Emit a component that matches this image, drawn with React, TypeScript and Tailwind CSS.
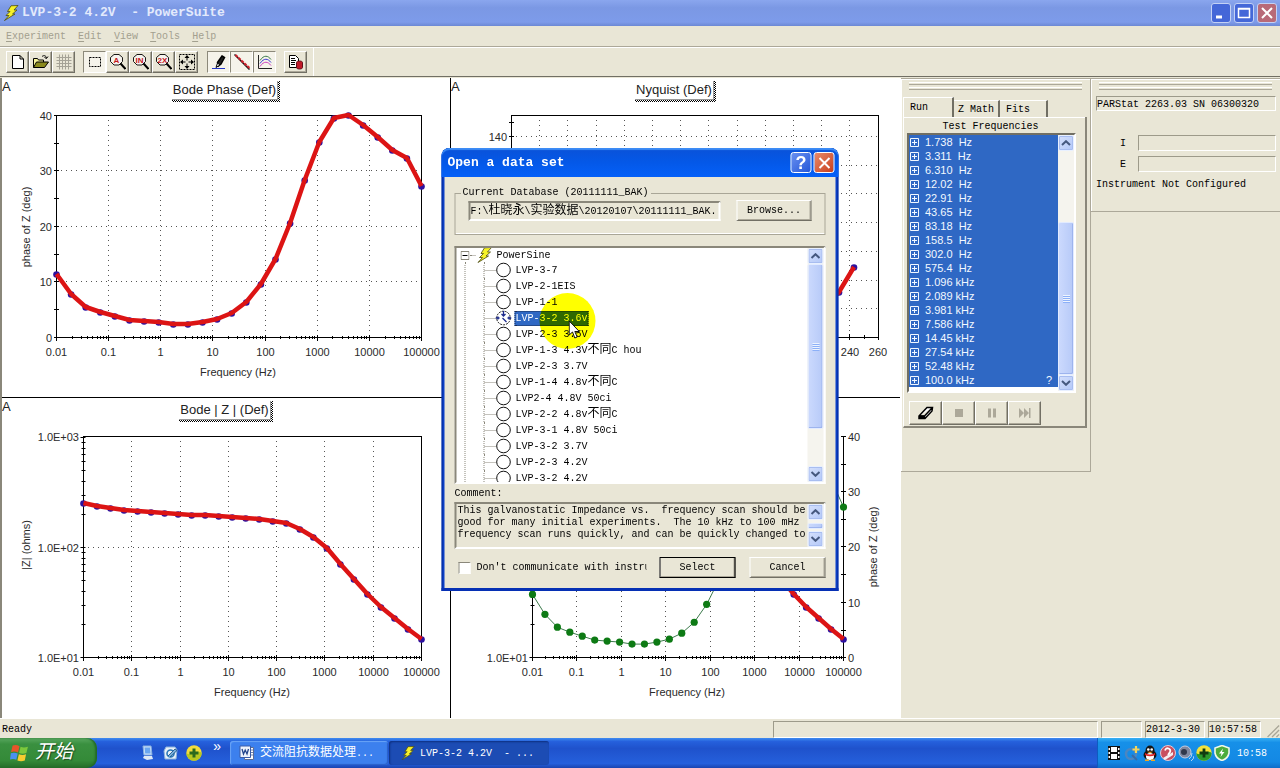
import React from "react";

const LIST = [
  "1.738  Hz", "3.311  Hz", "6.310  Hz", "12.02  Hz", "22.91  Hz", "43.65  Hz",
  "83.18  Hz", "158.5  Hz", "302.0  Hz", "575.4  Hz", "1.096 kHz", "2.089 kHz",
  "3.981 kHz", "7.586 kHz", "14.45 kHz", "27.54 kHz", "52.48 kHz", "100.0 kHz",
];

const DATA_SETS = [
  "LVP-3-7", "LVP-2-1EIS", "LVP-1-1", "LVP-3-2 3.6v", "LVP-2-3 3.5V",
  "LVP-1-3 4.3V不同C hou", "LVP-2-3 3.7V", "LVP-1-4 4.8v不同C", "LVP2-4 4.8V 50ci",
  "LVP-2-2 4.8v不同C", "LVP-3-1 4.8V 50ci", "LVP-3-2 3.7V", "LVP-2-3 4.2V", "LVP-3-2 4.2V",
];
const SELECTED = "LVP-3-2 3.6v";

const PHASE = [
  274, 294, 307, 312, 316, 320, 321, 322, 324, 324, 322, 319, 313, 302, 284, 259,
  223, 180, 142, 118, 115, 125, 137, 150, 158, 186,
];
const MODULUS = [
  503, 506, 508, 510, 511, 512, 513, 514, 515, 515, 516, 517, 518, 519, 521, 523,
  529, 537, 548, 564, 579, 594, 607, 618, 629, 639,
];
const DECADES = ["0.01", "0.1", "1", "10", "100", "1000", "10000", "100000"];

/* Latin text is set in a 6px-wide mono face; Han characters are two cells wide. */
function Mixed({ text }: { text: string }) {
  return (
    <>
      {text.split(/([\u4e00-\u9fff]+)/).map((part, i) =>
        i % 2 ? <span key={i} className="text-[12px] leading-none">{part}</span> : part
      )}
    </>
  );
}

function Bolt({ size }: { size: "sm" | "md" }) {
  return (
    <svg viewBox="0 0 16 16" className={size === "sm" ? "size-[14px] shrink-0" : "size-4 shrink-0"} aria-hidden="true">
      <path d="M8 .8 15 .5 11 5h3L9.5 9H12L1.5 15.5 6 10.5H3L7 6.5H4.5Z" fill="#f6f22a" stroke="#4a4a10" strokeWidth=".8" />
    </svg>
  );
}

type Pt = [number, number];
const path = (pts: Pt[]) => pts.map((p) => p.join(",")).join(" ");
const spread = (x0: number, x1: number, ys: number[]): Pt[] =>
  ys.map((y, i) => [x0 + ((x1 - x0) * i) / (ys.length - 1), y]);

function LogAxisX({ x0, x1, top, bottom }: { x0: number; x1: number; top: number; bottom: number }) {
  const step = (x1 - x0) / 7;
  return (
    <g>
      {DECADES.map((d, i) => {
        const x = Math.round(x0 + step * i) + 0.5;
        return (
          <g key={d}>
            {i > 0 && i < 7 && (
              <line x1={x} x2={x} y1={top + 5} y2={bottom} stroke="#555" strokeDasharray="1 4" />
            )}
            <line x1={x} x2={x} y1={bottom - 2} y2={bottom + 4} stroke="#000" />
            <text x={x} y={bottom + 19} textAnchor="middle">{d}</text>
            {i < 7 &&
              [2, 3, 4, 5, 6, 7, 8, 9].map((n) => {
                const mx = Math.round(x0 + step * (i + Math.log10(n))) + 0.5;
                return <line key={n} x1={mx} x2={mx} y1={bottom - 1} y2={bottom + 2} stroke="#000" />;
              })}
          </g>
        );
      })}
    </g>
  );
}

function LogTicksY({ x, top, bottom }: { x: number; top: number; bottom: number }) {
  const step = (bottom - top) / 2;
  return (
    <g stroke="#000">
      {[0, 1, 2].map((d) => (
        <line key={d} x1={x - 3} x2={x + 2} y1={Math.round(top + d * step - 0.5) + 0.5} y2={Math.round(top + d * step - 0.5) + 0.5} />
      ))}
      {[0, 1].flatMap((d) =>
        [2, 3, 4, 5, 6, 7, 8, 9].map((n) => {
          const y = Math.round(bottom - step * (d + Math.log10(n))) + 0.5;
          return <line key={`${d}${n}`} x1={x - 2} x2={x + 2} y1={y} y2={y} />;
        })
      )}
    </g>
  );
}

function RedSeries({ pts }: { pts: Pt[] }) {
  return (
    <g>
      {pts.map(([x, y], i) => (
        <circle key={i} cx={x} cy={y + 0.5} r="3.3" fill="#2c12a0" />
      ))}
      <polyline points={path(pts)} fill="none" stroke="#dc1414" strokeWidth="4.5" strokeLinejoin="round" />
    </g>
  );
}

function ChartCell({ title, viewBox, border, children }: { title?: string; viewBox: string; border: string; children: React.ReactNode }) {
  return (
    <section className={`flex min-h-0 min-w-0 flex-col overflow-hidden border-black ${border}`}>
      <header className="relative flex h-6 shrink-0 justify-center pt-[3px]">
        <span className="absolute left-0 top-0 text-[13px] leading-[18px] text-[#222]">A</span>
        {title && (
          <div className="h-[21px] bg-[repeating-conic-gradient(#000_0_25%,#fff_0_50%)] bg-[length:2px_2px] pb-[2px] pr-[2px]">
            <h2 className="h-full border-b border-r border-[#999] bg-white px-px text-[13px] leading-[18px] text-[#222]">{title}</h2>
          </div>
        )}
      </header>
      <svg viewBox={viewBox} className="min-h-0 w-full flex-1 fill-[#2a2a2a] text-[11px]" role="img" aria-label={title ?? "Chart"}>
        {children}
      </svg>
    </section>
  );
}

function PhaseChart() {
  return (
    <ChartCell title="Bode Phase (Def)" viewBox="2 102 448 295" border="border-b border-r">
      <rect x="56.5" y="115.5" width="365" height="222" fill="none" stroke="#000" />
      <LogAxisX x0={56} x1={421} top={115} bottom={337} />
      {[0, 10, 20, 30, 40].map((v, i) => {
        const y = 337.5 - Math.round(i * 55.5);
        return (
          <g key={v}>
            {i > 0 && i < 4 && <line x1="61" x2="421" y1={y} y2={y} stroke="#555" strokeDasharray="1 4" />}
            <line x1="54" x2="59" y1={y} y2={y} stroke="#000" />
            {i > 0 && <line x1="54" x2="59" y1={y + 28} y2={y + 28} stroke="#000" />}
            <text x="52" y={y + 4} textAnchor="end">{v}</text>
          </g>
        );
      })}
      <text transform="translate(30 227) rotate(-90)" textAnchor="middle">phase of Z (deg)</text>
      <text x="238" y="376" textAnchor="middle">Frequency (Hz)</text>
      <RedSeries pts={spread(56.5, 421.5, PHASE)} />
    </ChartCell>
  );
}

function NyquistChart() {
  const vs = Array.from({ length: 12 }, (_, i) => Math.round(511 + (i + 1) * 28.2) + 0.5);
  return (
    <ChartCell title="Nyquist (Def)" viewBox="451 102 449 295" border="border-b">
      <rect x="511.5" y="115.5" width="367" height="222" fill="none" stroke="#000" />
      {vs.map((x) => (
        <g key={x}>
          <line x1={x} x2={x} y1="120" y2="337" stroke="#555" strokeDasharray="1 4" />
          <line x1={x} x2={x} y1="334" y2="340" stroke="#000" />
        </g>
      ))}
      <line x1="864.5" x2="864.5" y1="335" y2="339" stroke="#000" />
      <line x1="878.5" x2="878.5" y1="334" y2="340" stroke="#000" />
      {Array.from({ length: 7 }, (_, i) => Math.round(136 + i * 28.7) + 0.5).map((y) => (
        <g key={y}>
          <line x1="516" x2="878" y1={y} y2={y} stroke="#555" strokeDasharray="1 4" />
          <line x1="509" x2="514" y1={y} y2={y} stroke="#000" />
        </g>
      ))}
      <line x1="509" x2="514" y1="122.5" y2="122.5" stroke="#000" />
      <text x="507" y="141" textAnchor="end">140</text>
      <text x="850" y="356" textAnchor="middle">240</text>
      <text x="878" y="356" textAnchor="middle">260</text>
      <RedSeries pts={[[790, 322], [818, 312], [839, 292], [854, 267]]} />
    </ChartCell>
  );
}

function ModulusChart() {
  return (
    <ChartCell title="Bode | Z | (Def)" viewBox="2 422 448 296" border="border-r">
      <rect x="83.5" y="436.5" width="338" height="221" fill="none" stroke="#000" />
      <LogAxisX x0={83} x1={421} top={436} bottom={657} />
      <LogTicksY x={83.5} top={437} bottom={657} />
      <line x1="88" x2="421" y1="547.5" y2="547.5" stroke="#555" strokeDasharray="1 4" />
      <text x="79" y="441" textAnchor="end">1.0E+03</text>
      <text x="79" y="552" textAnchor="end">1.0E+02</text>
      <text x="79" y="662" textAnchor="end">1.0E+01</text>
      <text transform="translate(30 545) rotate(-90)" textAnchor="middle">|Z| (ohms)</text>
      <text x="252" y="696" textAnchor="middle">Frequency (Hz)</text>
      <RedSeries pts={spread(83.5, 421.5, MODULUS)} />
    </ChartCell>
  );
}

function CombinedChart() {
  const phase = spread(532.5, 843.5, PHASE.map((y) => 657.5 - (337.5 - y) * 0.993));
  return (
    <ChartCell viewBox="451 422 449 296" border="">
      <path d="M532.5 436V657.5H843.5V436" fill="none" stroke="#000" />
      <LogAxisX x0={532} x1={843} top={436} bottom={657} />
      <LogTicksY x={532.5} top={437} bottom={657} />
      <text x="528" y="662" textAnchor="end">1.0E+01</text>
      {[0, 10, 20, 30, 40].map((v, i) => {
        const y = 657.5 - Math.round(i * 55.25);
        return (
          <g key={v}>
            <line x1="841" x2="846" y1={y} y2={y} stroke="#000" />
            {i > 0 && <line x1="841" x2="846" y1={y + 28} y2={y + 28} stroke="#000" />}
            <text x="848" y={y + 4}>{v}</text>
          </g>
        );
      })}
      <text transform="translate(877 547) rotate(-90)" textAnchor="middle">phase of Z (deg)</text>
      <text x="687" y="696" textAnchor="middle">Frequency (Hz)</text>
      <polyline points={path(phase)} fill="none" stroke="#3c7a4c" />
      {phase.map(([x, y], i) => (
        <circle key={i} cx={x} cy={y} r="3.6" fill="#0d7a14" />
      ))}
      <RedSeries pts={spread(532.5, 843.5, MODULUS)} />
    </ChartCell>
  );
}

function ScrollArrow({ up }: { up?: boolean }) {
  return (
    <button aria-label={up ? "Scroll up" : "Scroll down"} className="flex h-4 w-full shrink-0 items-center justify-center rounded-[2px] border border-[#e8f0ff] bg-gradient-to-br from-[#d5e0fc] to-[#b3c8f8] shadow-[0_0_0_1px_#a8bdf0_inset]">
      <svg viewBox="0 0 10 6" className="h-[6px] w-[10px]">
        <path d={up ? "M1 5 5 1.2 9 5" : "M1 1 5 4.8 9 1"} fill="none" stroke="#46597f" strokeWidth="2" />
      </svg>
    </button>
  );
}

function ScrollBar({ lead, thumb, grip = true }: { lead: string; thumb: string; grip?: boolean }) {
  return (
    <div className="flex w-4 shrink-0 flex-col bg-[#f5f4ee]">
      <ScrollArrow up />
      <div className="flex min-h-0 flex-1 flex-col">
        <div className={lead} />
        <div className={`flex flex-col items-center justify-center gap-px rounded-[2px] border border-[#e2ebff] bg-gradient-to-r from-[#cbd9fd] to-[#b7caf8] shadow-[inset_-1px_-1px_0_#9db4ee] ${thumb}`}>
          {grip && [0, 1, 2, 3].map((n) => <i key={n} className="h-px w-[7px] bg-[#eef4fe] shadow-[0_1px_0_#8cb0f8]" />)}
        </div>
      </div>
      <ScrollArrow />
    </div>
  );
}

const RAISED = "border border-t-white border-l-white border-b-[#716f64] border-r-[#716f64] shadow-[inset_-1px_-1px_0_#aca899]";
const SUNKEN = "border border-t-[#9d9a8a] border-l-[#9d9a8a] border-b-white border-r-white";
const MONO = "font-['Liberation_Mono','Noto_Sans_CJK_SC',monospace] text-[10px]";

function Tool({ label, pressed, children }: { label: string; pressed?: boolean; children: React.ReactNode }) {
  return (
    <button
      aria-label={label}
      className={`flex h-[22px] w-[23px] items-center justify-center ${pressed ? "border border-b-white border-l-[#8c897a] border-r-white border-t-[#8c897a] bg-[#f5f3ea]" : RAISED}`}
    >
      <svg viewBox="0 0 16 16" className="size-4 shrink-0" fill="none" stroke="#000">{children}</svg>
    </button>
  );
}

function Lens({ text }: { text: string }) {
  return (
    <>
      <path d="M4 .5h5l3.500 3v4L9 11H4L.5 7.500v-4z" fill="#f6f3ee" strokeWidth=".9" />
      <path d="m10.500 9.500 5 5.500" strokeWidth="2" />
      <text x="6.5" y="8.500" textAnchor="middle" stroke="none" fill="#c4161c" className="text-[8px] font-bold">{text}</text>
    </>
  );
}

function Toolbar() {
  return (
    <div role="toolbar" className="flex h-[29px] items-center border-t border-white pl-[6px]">
      <Tool label="New"><path d="M2.500 1.500h7.500l3.500 3.500v9.500h-11zM10 1.500v3.500h3.500" fill="#fff" /></Tool>
      <Tool label="Open"><path d="M.5 13.500v-9h4l1 1.500h5v2" fill="#f5f29a" /><path d="m.5 13.500 3-5.500h12l-4 5.500z" fill="#8a8a1c" /><path d="M9 2.500c2-1.500 4-1 4.500 1.500m-2-.5 2 1 1.500-2" /></Tool>
      <Tool label="Grid"><path d="M.5 3.500h15M.5 6.500h15M.5 9.500h15M.5 12.500h15M3.500 .5v15M6.500 .5v15M9.500 .5v15M12.500 .5v15" stroke="#a5a296" /></Tool>
      <span className="w-2" />
      <Tool label="Select area" pressed><rect x="2.500" y="3.500" width="11" height="9" strokeDasharray="2 1" /></Tool>
      <Tool label="Zoom auto"><Lens text="A" /></Tool>
      <Tool label="Zoom in"><Lens text="IN" /></Tool>
      <Tool label="Zoom 2x"><Lens text="2X" /></Tool>
      <Tool label="Fit"><rect x=".5" y=".5" width="15" height="15" strokeDasharray="2 1" /><path d="M8 3v3.500M8 9.500V13M3 8h3.500M9.500 8H13" /><path d="m8 1 2.500 3h-5zM8 15l2.500-3h-5zM1 8l3-2.500v5zM15 8l-3-2.500v5z" fill="#000" stroke="none" /></Tool>
      <span className="w-[9px]" />
      <Tool label="Pen" pressed><path d="m11 2 2.500 1.500L10 10l-2.500 2-1-3.500z" fill="#222" strokeWidth="1.500" /><path d="m6.500 9 2.500 2L5 13.500z" fill="#fff" /><path d="M1 14.500h13" stroke="#2337c8" /></Tool>
      <Tool label="Line" pressed><path d="m.5.500 15 15" stroke="#111" strokeWidth="1.500" /><path d="m1.500 1 14 13" stroke="#d0202c" strokeWidth="2" strokeDasharray="3 1" /></Tool>
      <Tool label="Overlay" pressed><path d="M1.500 1v13.500H15" stroke="#222" /><path d="M3 6.500c4-6 8-5 11-1" stroke="#3a7a4a" /><path d="M3 9.500c4-6 8-5 11-1" stroke="#3a3ad0" /><path d="M3 12.500c4-6 8-5 11-1" stroke="#d040c0" /></Tool>
      <span className="w-2" />
      <Tool label="Report"><path d="M1.500 1.500h6l3 3v9h-9z" fill="#fff" /><path d="M3 4.500h4M3 6.500h5M3 8.500h4M3 10.500h4" /><path d="M8.500 8.500c0-2 6-2 6 0v5c0 2-6 2-6 0z" fill="#c01828" stroke="#601018" /></Tool>
      <span className="ml-[6px] h-full w-px border-r border-white bg-[#b5b2a2]" />
    </div>
  );
}

function CaptionButton({ label, kind }: { label: string; kind: "min" | "max" | "close" }) {
  return (
    <button aria-label={label} className={`flex size-5 items-center justify-center rounded-[3px] border border-[#c3d1f5] ${kind === "close" ? "bg-[#b86a78]" : "bg-[#4467d8]"}`}>
      <svg viewBox="0 0 14 14" className="size-[14px]" fill="none" stroke="#fff">
        {kind === "min" && <path d="M2 11h6" strokeWidth="3" />}
        {kind === "max" && <path d="M1.500 2.500h11v9h-11zM1 3h12" strokeWidth="1.500" />}
        {kind === "close" && <path d="m2 2 10 10M12 2 2 12" strokeWidth="2" />}
      </svg>
    </button>
  );
}

function Gripper() {
  return (
    <div className="flex flex-col gap-[2px]" aria-hidden="true">
      <div className="h-[3px] border-b border-t border-b-[#aca899] border-t-white" />
      <div className="h-[3px] border-b border-t border-b-[#aca899] border-t-white" />
    </div>
  );
}

function RunPanel() {
  return (
    <section className="flex h-[393px] w-[190px] flex-col border-b border-r border-[#aca899] pt-[3px] shadow-[inset_1px_1px_0_#fff]">
      <div className="px-2"><Gripper /></div>
      <div role="tablist" className={`mt-[7px] flex items-end pl-[2px] ${MONO} text-black`}>
        <button role="tab" aria-selected="true" className="h-5 w-[51px] border-l border-r-2 border-t border-l-white border-r-[#716f64] border-t-white pl-[6px] text-left leading-[17px]">Run</button>
        <button role="tab" aria-selected="false" className="h-[17px] w-[46px] border-r-2 border-t border-r-[#716f64] border-t-white pl-1 text-left leading-[17px]">Z Math</button>
        <button role="tab" aria-selected="false" className="h-[17px] w-[48px] border-r-2 border-t border-r-[#716f64] border-t-white pl-[6px] text-left leading-[17px]">Fits</button>
      </div>
      <div className="ml-[2px] mr-[3px] flex h-[311px] flex-col border-b-2 border-l border-r-2 border-b-[#8a877a] border-l-white border-r-[#8a877a] shadow-[inset_0_1px_0_#fff]">
        <h3 className={`pr-2 pt-[3px] text-center leading-[13px] ${MONO}`}>Test Frequencies</h3>
        <div className="ml-[3px] mr-[9px] flex h-[260px] border-2 border-b-white border-l-[#716f64] border-r-white border-t-[#716f64] bg-white">
          <ul className="min-w-0 flex-1 overflow-hidden text-[11px] text-[#f2f8ff]">
            {LIST.map((f, i) => (
              <li key={f} className="flex h-[14px] items-center bg-[#2f68c4] pl-px pr-[6px]">
                <svg viewBox="0 0 9 9" className="size-[9px] shrink-0" fill="none" stroke="#f2f8ff">
                  <path d="M.5.5h8v8h-8zM2 4.500h5M4.500 2v5" />
                </svg>
                <span className="ml-[6px] flex-1 whitespace-pre leading-[14px]">{f}</span>
                {i === LIST.length - 1 && <span>?</span>}
              </li>
            ))}
          </ul>
          <ScrollBar lead="h-[71px]" thumb="flex-1" />
        </div>
        <div className="ml-[5px] mt-2 flex">
          {["Edit", "Stop", "Pause", "Skip"].map((l, i) => (
            <button key={l} aria-label={l} className={`flex h-6 w-[33px] items-center justify-center ${RAISED}`}>
              <svg viewBox="0 0 16 14" className="h-[14px] w-4" fill="#aca899">
                {i === 0 && <path d="M1 10 9 1.500h5.500L14 5l-7 7.500H1Zm0 0h5.500L14 2M6.500 10v2.500" fill="#fff" stroke="#000" strokeWidth="1.500" />}
                {i === 0 && <path d="M1 9.500h5.500V13H1z" fill="#000" />}
                {i === 1 && <path d="M4 3h8v8H4z" />}
                {i === 2 && <path d="M4 2.500h3v9H4zM9 2.500h3v9H9z" />}
                {i === 3 && <path d="m2 2 5 5-5 5zM7 2l5 5-5 5zM12 2h1.500v10H12z" />}
              </svg>
            </button>
          ))}
        </div>
      </div>
    </section>
  );
}

function InstrumentPanel() {
  return (
    <section className={`flex h-[133px] min-w-0 flex-1 flex-col border-b border-[#aca899] pl-[5px] pr-1 pt-[3px] shadow-[inset_1px_1px_0_#fff] ${MONO} text-black`}>
      <div className="pl-[3px] pr-1"><Gripper /></div>
      <div className={`mt-[6px] h-[15px] leading-[15px] ${SUNKEN}`}>PARStat 2263.03 SN 06300320</div>
      <div className="mt-6 flex flex-col gap-[5px]">
        {["I", "E"].map((n) => (
          <label key={n} className="flex h-4 items-center">
            <span className="w-[42px] pl-6">{n}</span>
            <input readOnly className={`h-4 min-w-0 flex-1 bg-transparent ${SUNKEN}`} />
          </label>
        ))}
      </div>
      <p className="mt-[6px] leading-[14px]">Instrument Not Configured</p>
    </section>
  );
}

function Tree() {
  return (
    <div className="mt-[11px] flex h-[238px] border-2 border-b-white border-l-[#8a877a] border-r-white border-t-[#8a877a] bg-white">
      <ul className={`min-w-0 flex-1 overflow-hidden ${MONO} text-black`}>
        <li>
          <div className="flex h-[14px] items-center pl-1">
            <svg viewBox="0 0 9 9" className="size-[9px]" fill="none"><path d="M.5.500h8v8h-8z" stroke="#8a877a" /><path d="M2 4.500h5" stroke="#000" /></svg>
            <span className="mr-px w-[6px] border-t border-dotted border-[#8a877a]" />
            <Bolt size="md" />
            <span className="ml-1">PowerSine</span>
          </div>
          <ul className="ml-2 border-l border-dotted border-[#8a877a] pl-[18px]">
            {DATA_SETS.map((name) => {
              const on = name === SELECTED;
              return (
                <li key={name} className="relative flex h-4 items-center border-l border-dotted border-[#8a877a]">
                  <span className="w-[11px] border-t border-dotted border-[#8a877a]" />
                  <svg viewBox="0 0 16 16" className="size-4 shrink-0" fill="none" stroke="#111">
                    <circle cx="8" cy="8" r="6.8" strokeDasharray={on ? "2 1" : undefined} />
                    {on && <path d="M8 1v5M6 4l2 2 2-2M0 8h4M12 8h4M2.500 6.500v3M13.500 6.500v3M7 8l4 4" stroke="#1c2a8c" strokeWidth="1.3" />}
                  </svg>
                  <span className={`ml-[3px] whitespace-pre px-px leading-[15px] ${on ? "bg-[#2f68c4] text-white outline-dotted outline-1 -outline-offset-1 outline-[#1b2c55]" : ""}`}>
                    <Mixed text={name} />
                  </span>
                  {on && (
                    <>
                      <span className="absolute left-[55px] top-[-17px] z-10 size-[56px] rounded-full bg-[#ffff00] mix-blend-multiply" />
                      <svg viewBox="0 0 12 20" className="absolute left-[84px] top-[10px] z-20 h-5 w-3">
                        <path d="M.7 1v14l3.300-3 2.300 6 2.400-1-2.400-5.500h4.500z" fill="#fff" stroke="#111" />
                      </svg>
                    </>
                  )}
                </li>
              );
            })}
          </ul>
        </li>
      </ul>
      <ScrollBar lead="h-0" thumb="h-[165px]" />
    </div>
  );
}

function Dialog() {
  return (
    <div role="dialog" aria-label="Open a data set" className="absolute left-1/2 top-[148px] z-30 w-[397px] -translate-x-1/2 rounded-t-lg bg-[#0a3fc8] shadow-[inset_0_0_0_1px_#06268c]">
      <div className="flex h-[29px] items-center gap-[2px] rounded-t-lg bg-gradient-to-b from-[#0a52d8] via-[#0458e8] to-[#0560f8] pl-[6px] pr-1 shadow-[inset_0_2px_1px_#3d8cf5]">
        <h1 className="flex-1 font-['Liberation_Mono',monospace] text-[13px] font-bold text-white">Open a data set</h1>
        <button aria-label="Help" className="size-[21px] rounded-[3px] border border-white bg-gradient-to-br from-[#6a90f0] to-[#2456d8] text-[18px] font-bold leading-[18px] text-white">?</button>
        <button aria-label="Close" className="flex size-[21px] items-center justify-center rounded-[3px] border border-white bg-gradient-to-br from-[#e88a68] to-[#c83c18]">
          <svg viewBox="0 0 12 12" className="size-3" stroke="#fff" strokeWidth="2"><path d="m1 1 10 10M11 1 1 11" /></svg>
        </button>
      </div>
      <div className={`mx-[3px] flex flex-col bg-[#e9e6d6] px-[10px] pb-[10px] pt-[9px] text-black ${MONO}`}>
        <fieldset className="flex h-[49px] min-w-0 items-center justify-between border border-[#a9a697] px-[13px] pb-[3px] shadow-[inset_0_-1px_0_#fff]">
          <legend className="-ml-[8px] px-[2px] leading-[14px]">Current Database (20111111_BAK)</legend>
          <output className="block h-5 w-[252px] overflow-hidden whitespace-nowrap border-2 border-b-white border-l-[#8a877a] border-r-white border-t-[#8a877a] leading-[17px]">
            <Mixed text={"F:\\杜晓永\\实验数据\\20120107\\20111111_BAK."} />
          </output>
          <button className={`h-[21px] w-[75px] ${RAISED}`}>Browse...</button>
        </fieldset>
        <Tree />
        <label htmlFor="comment" className="pt-[3px] leading-[14px]">Comment:</label>
        <div className="mt-px flex h-[47px] border-2 border-b-white border-l-[#8a877a] border-r-white border-t-[#8a877a]">
          <textarea
            id="comment"
            readOnly
            wrap="off"
            className="min-w-0 flex-1 resize-none overflow-hidden bg-transparent pl-px pt-px leading-[12px]"
            defaultValue={"This galvanostatic Impedance vs.  frequency scan should be\ngood for many initial experiments.  The 10 kHz to 100 mHz\nfrequency scan runs quickly, and can be quickly changed to"}
          />
          <ScrollBar lead="h-[3px]" thumb="h-[6px]" grip={false} />
        </div>
        <div className="mt-2 flex h-[21px] items-center">
          <label className="flex w-[192px] items-center gap-[6px] overflow-hidden whitespace-nowrap pl-1">
            <input type="checkbox" className="size-3 shrink-0 appearance-none border border-b-white border-l-[#8a877a] border-r-white border-t-[#8a877a] bg-white" />
            Don't communicate with instrument
          </label>
          <button className={`ml-[13px] h-[21px] w-[76px] outline-1 -outline-offset-1 outline-black ${RAISED}`}>Select</button>
          <button className={`ml-auto h-[21px] w-[76px] ${RAISED}`}>Cancel</button>
        </div>
      </div>
      <div className="h-[3px] bg-[#0630b4]" />
    </div>
  );
}

function StatusBar() {
  return (
    <footer className={`flex h-5 items-stretch border-t border-white bg-[#e9e6d6] pl-[2px] pt-[2px] text-black ${MONO}`}>
      <span className="flex-1 leading-[17px]">Ready</span>
      <span className={`mr-[3px] w-[325px] ${SUNKEN}`} />
      <span className={`mr-[3px] w-[41px] ${SUNKEN}`} />
      <span className={`mr-[3px] w-[60px] leading-[15px] ${SUNKEN}`}>2012-3-30</span>
      <span className={`w-[53px] leading-[15px] ${SUNKEN}`}>10:57:58</span>
      <svg viewBox="0 0 18 17" className="ml-[3px] h-[17px] w-[16px]" stroke="#a9a697"><path d="m4 17 13-13M9 17l8-8M14 17l3-3" strokeWidth="1.5" /></svg>
    </footer>
  );
}

function Taskbar() {
  return (
    <nav className={`flex h-[30px] items-stretch bg-[linear-gradient(#3f8cf0,#2560dc_12%,#1f52cc_35%,#2560dc_85%,#1a44b0)] text-white ${MONO}`}>
      <button className="flex w-[97px] items-center gap-[6px] rounded-r-[10px] bg-[linear-gradient(#5aa860,#3a9040_20%,#348a38_75%,#256c28)] pl-[10px] shadow-[inset_-2px_0_2px_#226a28]">
        <svg viewBox="0 0 18 17" className="h-[18px] w-[19px]">
          <path d="M2.500 1.500Q5.500 0 9 2L7.600 8Q4.500 6.500 1 7.500z" fill="#e8542a" />
          <path d="M10 2.500Q13 4 17 2.500L15.500 8.500Q12 10 8.600 8.500z" fill="#7cc83c" />
          <path d="M.8 8.700Q4 7.500 7.300 9L6 15Q3 13.500 0 14.700z" fill="#4a90f0" />
          <path d="M8.400 9.700Q12 11.200 15.200 9.700L14 15.500Q10.500 17 7 15.500z" fill="#f8cc30" />
        </svg>
        <span className="text-[19px] italic leading-none [text-shadow:1px_1px_1px_#1c4a20]">开始</span>
      </button>
      <div className="flex w-[133px] items-center gap-[7px] pl-[43px]">
        <svg viewBox="0 0 16 16" className="size-4" aria-hidden="true"><path d="M3 1h8l1 9H4z" fill="#cfe4fb" stroke="#88b0e0" /><path d="M4.500 2.500h5.500l.6 6H5.200z" fill="#6aa6f0" /><path d="M4 11h8l1 3-6 1-4-2z" fill="#dfe9f5" /></svg>
        <svg viewBox="0 0 16 16" className="size-4" aria-hidden="true"><path d="M3 2h9l2 3-1 9H2L1 6z" fill="#e8f0f8" stroke="#8db4dc" /><circle cx="7.5" cy="8.5" r="3.5" fill="none" stroke="#2a78b8" strokeWidth="1.6" /><path d="m5 11 7-7 2 1.500L7 12" fill="#7ab0dc" stroke="#124a80" strokeWidth=".8" /></svg>
        <svg viewBox="0 0 16 16" className="size-4" aria-hidden="true"><circle cx="8" cy="8" r="7.7" fill="#f3dc3c" /><path d="M.3 8a7.700 7.700 0 0 0 15.400 0C11 4 5 12 .3 8z" fill="#b8c820" /><path d="M8 3.500v9M3.500 8h9" stroke="#2c6a1c" strokeWidth="3" /></svg>
        <span className="self-start pl-1 pt-[2px] text-[14px] leading-[14px]">»</span>
      </div>
      <button className="my-[3px] flex w-[158px] items-center gap-[5px] rounded-[3px] bg-[#3c80ee] pl-[9px] shadow-[inset_1px_1px_1px_#6aa4f6,inset_-1px_-1px_1px_#2a60c8]">
        <svg viewBox="0 0 16 16" className="size-4 shrink-0" aria-hidden="true"><path d="M5.500 2.500h9v12h-9z" fill="#fff" stroke="#5c6c94" /><path d="M12 5h2M12 7.500h2M12 10h2" stroke="#6c80b0" /><path d="M1 1h10.500v11.500H1z" fill="#eef3fc" stroke="#3a5ca8" /><path d="m3 4 1.500 5L6.200 5 8 9l1.500-5" fill="none" stroke="#23458c" strokeWidth="1.3" /></svg>
        <span className="whitespace-nowrap"><Mixed text="交流阻抗数据处理..." /></span>
      </button>
      <button className="my-[3px] ml-px flex w-[160px] items-center gap-[5px] whitespace-pre rounded-[3px] bg-[#1c4cb4] pl-3 shadow-[inset_1px_1px_2px_#0d2f80]">
        <Bolt size="sm" />
        LVP-3-2 4.2V  - ...
      </button>
      <div className="ml-auto flex w-[183px] items-center gap-[2px] border-l border-[#0d5cc0] bg-[linear-gradient(#38b0f4,#1690e8_15%,#1488e4_80%,#0f6cc8)] pl-2">
        <svg viewBox="0 0 16 16" className="size-4" aria-hidden="true"><path d="M2 1h12v14H2z" fill="#111" /><path d="M5 2h6v5H5zM5 9h6v5H5zM2.500 3h1.500v2H2.500zM2.500 7h1.500v2H2.500zM2.500 11h1.500v2H2.500zM12 3h1.500v2H12zM12 7h1.500v2H12zM12 11h1.500v2H12z" fill="#fff" /></svg>
        <svg viewBox="0 0 16 16" className="size-4" fill="none" aria-hidden="true"><circle cx="7" cy="9" r="5" stroke="#4c86c0" strokeWidth="2.5" /><path d="m8 10 5 5" stroke="#3a6ca4" strokeWidth="2" /><path d="M12 1v7M8.500 4.500h7" stroke="#f4d45c" strokeWidth="2.2" /></svg>
        <svg viewBox="0 0 16 16" className="size-4" aria-hidden="true"><ellipse cx="8" cy="10" rx="6.5" ry="5" fill="#151515" /><ellipse cx="8" cy="5.5" rx="4.5" ry="5" fill="#151515" /><ellipse cx="8" cy="11.5" rx="4" ry="3.5" fill="#fff" /><path d="M3 8q5 3 10 0v2q-5 2.500-10 0z" fill="#e02020" /><circle cx="6.3" cy="4.5" r="1.3" fill="#fff" /><circle cx="9.7" cy="4.5" r="1.3" fill="#fff" /><path d="M5 6.800h6L8 8.200zM3 14.500h4v1.500H3zM9 14.500h4v1.500H9z" fill="#f6a81c" /></svg>
        <svg viewBox="0 0 16 16" className="size-4" aria-hidden="true"><circle cx="8" cy="8" r="7.5" fill="#c85060" stroke="#e4c8d4" /><path d="M5 5.500q1-3 3.500-2t1.500 3.500L8 10" fill="none" stroke="#fff" strokeWidth="1.8" /><path d="m3 13 10-6v3l-8 5z" fill="#f5eef2" /></svg>
        <svg viewBox="0 0 16 16" className="size-4" aria-hidden="true"><circle cx="7" cy="7" r="6" fill="#8088a0" stroke="#c4cce0" /><circle cx="6" cy="7" r="3" fill="#30384c" /><path d="M11 14q3-2 3-6M13 16q3-2 3-5" fill="none" stroke="#b8d4f4" /></svg>
        <svg viewBox="0 0 16 16" className="size-4" aria-hidden="true"><circle cx="8" cy="8" r="7.7" fill="#f3e23c" /><path d="M.3 8a7.700 7.700 0 0 0 15.400 0C11 4 5 12 .3 8z" fill="#2c9c2c" /><path d="M8 3.500v9M3.500 8h9" stroke="#123c10" strokeWidth="2.8" /></svg>
        <svg viewBox="0 0 16 16" className="size-4" aria-hidden="true"><path d="M8 .5 15 3v5q-1 5.500-7 7.500Q2 13.500 1 8V3z" fill="#4cac3c" stroke="#f0f8e8" strokeWidth="1.6" /><path d="m9 3.500-4 5h2.500L6.500 12l4-5H8z" fill="#fff" /></svg>
        <time className="ml-[5px]">10:58</time>
      </div>
    </nav>
  );
}

export default function App() {
  return (
    <div className="relative flex h-screen min-h-[700px] flex-col overflow-hidden bg-[#e9e6d6] font-['Liberation_Sans','Noto_Sans_CJK_SC',sans-serif] text-black">
      <div className="flex h-[26px] shrink-0 items-center bg-[linear-gradient(#8aa6ee,#7b98e4_30%,#7d9bea_85%,#6c88d4)] pl-[3px] pr-[3px]">
        <Bolt size="md" />
        <span className="ml-[3px] flex-1 whitespace-pre font-['Liberation_Mono',monospace] text-[13px] font-bold text-[#e3eafc]">LVP-3-2 4.2V  - PowerSuite</span>
        <div className="flex gap-[3px]">
          <CaptionButton label="Minimize" kind="min" />
          <CaptionButton label="Maximize" kind="max" />
          <CaptionButton label="Close" kind="close" />
        </div>
      </div>
      <div role="menubar" className={`flex h-[21px] shrink-0 items-center gap-3 border-b border-[#aca899] pl-[6px] text-[#a3a08f] ${MONO}`}>
        {["Experiment", "Edit", "View", "Tools", "Help"].map((m) => (
          <button role="menuitem" key={m}>
            <span className="underline underline-offset-2">{m[0]}</span>{m.slice(1)}
          </button>
        ))}
      </div>
      <Toolbar />
      <main className="flex min-h-0 flex-1 border-t border-[#716f64] pt-px">
        <div className="grid min-h-0 min-w-0 flex-1 grid-cols-2 grid-rows-2 border-l-2 border-[#8a877a] bg-white">
          <PhaseChart />
          <NyquistChart />
          <ModulusChart />
          <CombinedChart />
        </div>
        <aside className="flex w-[380px] shrink-0 items-start border-l border-white pt-px shadow-[inset_0_1px_0_#aca899]">
          <RunPanel />
          <InstrumentPanel />
        </aside>
      </main>
      <StatusBar />
      <Taskbar />
      <Dialog />
    </div>
  );
}
